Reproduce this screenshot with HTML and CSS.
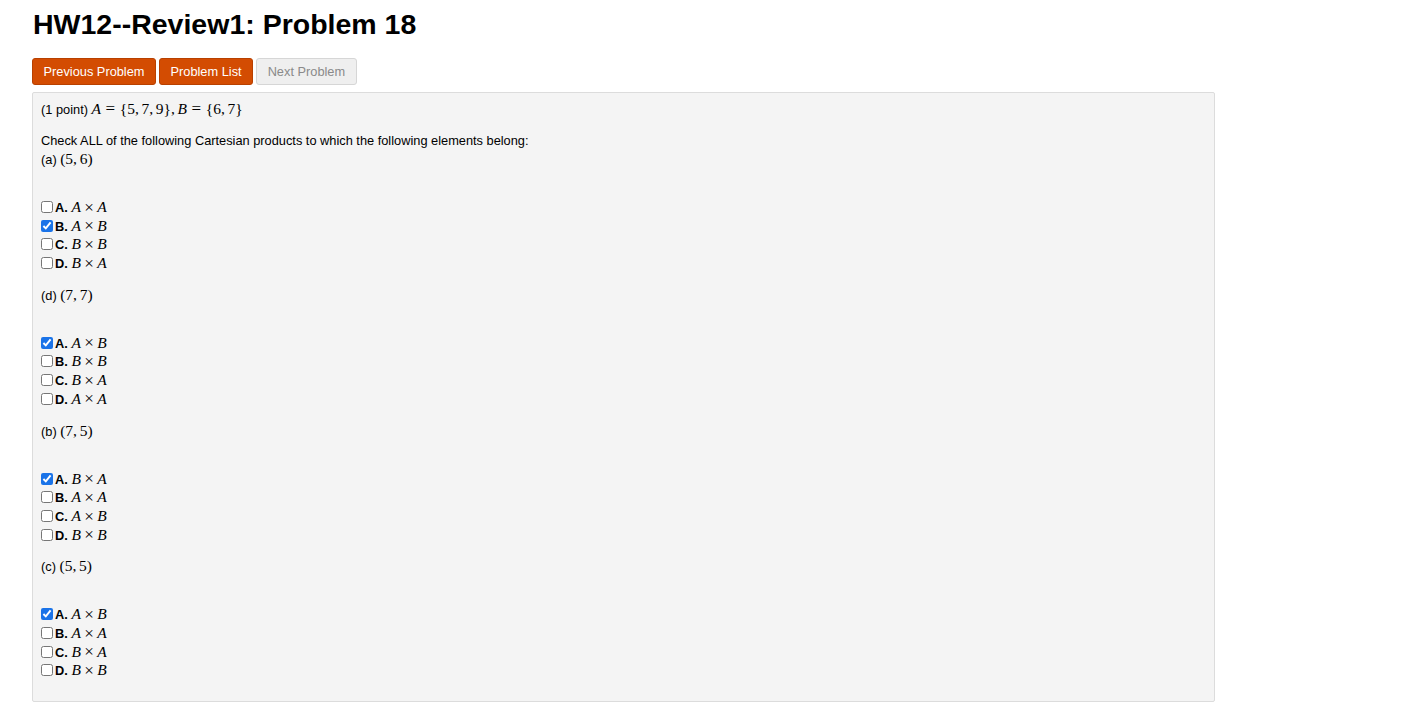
FILE: index.html
```html
<!DOCTYPE html>
<html>
<head>
<meta charset="utf-8">
<link rel="stylesheet" href="styles.css">
</head>
<body>
<div class="page">
  <h1 class="title">HW12--Review1: Problem 18</h1>
  <div class="nav">
    <button class="btn">Previous Problem</button>
    <button class="btn">Problem List</button>
    <button class="btn disabled">Next Problem</button>
  </div>
  <div class="problem">
    <div class="intro">(1 point) <span class="m"><i>A</i><span class="rel">=</span>{5,<span class="sp"></span>7,<span class="sp"></span>9},<span class="sp"></span><i>B</i><span class="rel">=</span>{6,<span class="sp"></span>7}</span></div>
    <div class="check">Check ALL of the following Cartesian products to which the following elements belong:</div>

    <div class="part">(a) <span class="m">(5,<span class="sp"></span>6)</span></div>
    <div class="opts">
      <label class="opt"><input type="checkbox"><b>A.</b> <span class="m"><i>A</i><span class="bin">×</span><i>A</i></span></label>
      <label class="opt"><input type="checkbox" checked><b>B.</b> <span class="m"><i>A</i><span class="bin">×</span><i>B</i></span></label>
      <label class="opt"><input type="checkbox"><b>C.</b> <span class="m"><i>B</i><span class="bin">×</span><i>B</i></span></label>
      <label class="opt"><input type="checkbox"><b>D.</b> <span class="m"><i>B</i><span class="bin">×</span><i>A</i></span></label>
    </div>

    <div class="part">(d) <span class="m">(7,<span class="sp"></span>7)</span></div>
    <div class="opts">
      <label class="opt"><input type="checkbox" checked><b>A.</b> <span class="m"><i>A</i><span class="bin">×</span><i>B</i></span></label>
      <label class="opt"><input type="checkbox"><b>B.</b> <span class="m"><i>B</i><span class="bin">×</span><i>B</i></span></label>
      <label class="opt"><input type="checkbox"><b>C.</b> <span class="m"><i>B</i><span class="bin">×</span><i>A</i></span></label>
      <label class="opt"><input type="checkbox"><b>D.</b> <span class="m"><i>A</i><span class="bin">×</span><i>A</i></span></label>
    </div>

    <div class="part">(b) <span class="m">(7,<span class="sp"></span>5)</span></div>
    <div class="opts">
      <label class="opt"><input type="checkbox" checked><b>A.</b> <span class="m"><i>B</i><span class="bin">×</span><i>A</i></span></label>
      <label class="opt"><input type="checkbox"><b>B.</b> <span class="m"><i>A</i><span class="bin">×</span><i>A</i></span></label>
      <label class="opt"><input type="checkbox"><b>C.</b> <span class="m"><i>A</i><span class="bin">×</span><i>B</i></span></label>
      <label class="opt"><input type="checkbox"><b>D.</b> <span class="m"><i>B</i><span class="bin">×</span><i>B</i></span></label>
    </div>

    <div class="part">(c) <span class="m">(5,<span class="sp"></span>5)</span></div>
    <div class="opts">
      <label class="opt"><input type="checkbox" checked><b>A.</b> <span class="m"><i>A</i><span class="bin">×</span><i>B</i></span></label>
      <label class="opt"><input type="checkbox"><b>B.</b> <span class="m"><i>A</i><span class="bin">×</span><i>A</i></span></label>
      <label class="opt"><input type="checkbox"><b>C.</b> <span class="m"><i>B</i><span class="bin">×</span><i>A</i></span></label>
      <label class="opt"><input type="checkbox"><b>D.</b> <span class="m"><i>B</i><span class="bin">×</span><i>B</i></span></label>
    </div>
  </div>
</div>
</body>
</html>
```

FILE: styles.css
```css
html, body {
  margin: 0;
  padding: 0;
  background: #fff;
}
body {
  font-family: "Liberation Sans", Arial, sans-serif;
  font-size: 12.8px;
  color: #000;
}
.page {
  width: 1183px;
  margin-left: 32px;
  padding-top: 7px;
}
.title {
  margin: 0 0 0 1px;
  font-size: 28.5px;
  font-weight: bold;
  line-height: 34px;
  height: 34px;
}
.nav {
  display: flex;
  gap: 3px;
  margin-top: 17px;
}
.btn {
  font-family: "Liberation Sans", Arial, sans-serif;
  font-size: 12.8px;
  height: 27px;
  padding: 0 10.5px;
  background: #d34c02;
  color: #fff;
  border: 1px solid #b84000;
  border-radius: 3px;
  line-height: 25px;
}
.btn.disabled {
  background: #efefef;
  color: #8a8a8a;
  border-color: #d6d6d6;
}
.problem {
  margin-top: 7px;
  background: #f4f4f4;
  border: 1px solid #dcdcdc;
  border-radius: 2px;
  padding: 7px 8px 20px 8px;
  height: 581px;
}
.m {
  font-family: "Liberation Serif", "Times New Roman", serif;
  font-size: 15.5px;
}
.m i {
  font-style: italic;
}
.rel {
  margin: 0 0.27em;
  font-size: 1.1em;
}
.bin {
  margin: 0 0.2em;
  font-size: 1.1em;
  line-height: 0;
  vertical-align: -0.04em;
}
.sp {
  display: inline-block;
  width: 0.17em;
}
.intro {
  line-height: 18px;
}
.check {
  margin-top: 13px;
  line-height: 18px;
}
.part {
  line-height: 18px;
}
.opts {
  margin-top: 29px;
  margin-bottom: 13px;
}
.opt {
  display: block;
  height: 18.7px;
  line-height: 18.7px;
}
.opt input {
  margin: 0 2px 0 0;
  width: 12px;
  height: 12px;
  vertical-align: -1px;
  accent-color: #1a73e8;
}
.opt b {
  font-weight: bold;
}
```
